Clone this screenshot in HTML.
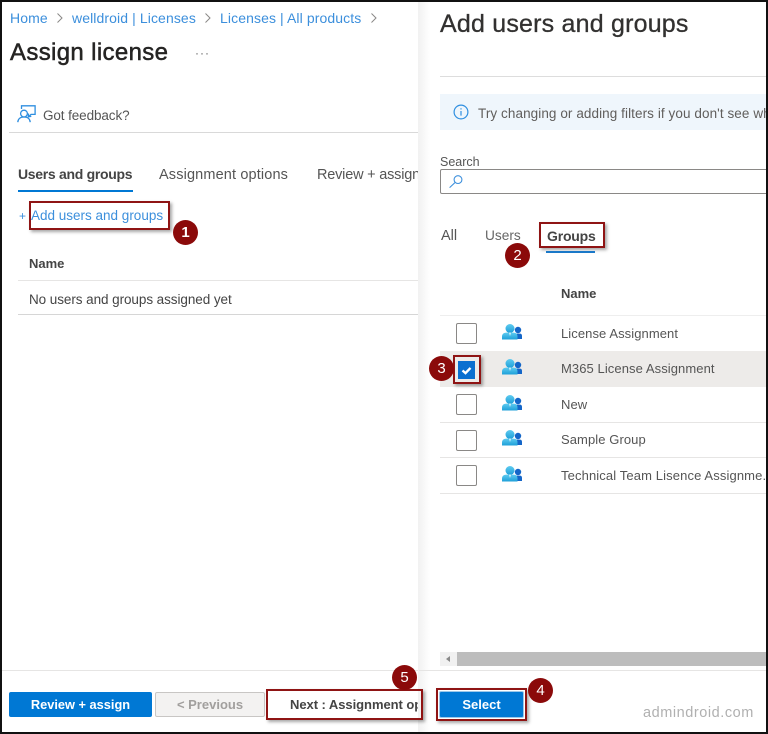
<!DOCTYPE html>
<html lang="en"><head><meta charset="utf-8"><title>Assign license</title>
<style>
html,body{margin:0;padding:0;background:#fff}
#p{position:relative;width:768px;height:734px;overflow:hidden;background:#fff;font-family:"Liberation Sans",sans-serif;color:#323130;filter:blur(.35px)}
.t{position:absolute;white-space:nowrap;line-height:20px;height:20px;font-size:14px}
.b{position:absolute}
.link{color:#3c8fdc}
.red{position:absolute;border:2px solid #8f1414;box-shadow:2px 2px 3px rgba(0,0,0,.35);box-sizing:border-box}
.c{position:absolute;width:25px;height:25px;border-radius:50%;background:#8b0a0a;color:#fff;text-align:center;line-height:25px;font-size:15px}
.cb{position:absolute;left:456px;width:21px;height:21px;box-sizing:border-box;border:1.5px solid #8a8886;border-radius:2px;background:#fff}
.l{position:absolute;height:1px;background:#e6e5e4}
svg{position:absolute;overflow:visible}
</style></head><body><div id="p">

<span class="t link" style="left:10px;top:8px;letter-spacing:.1px">Home</span>
<svg style="left:57px;top:13px" width="6" height="10" fill="none" stroke="#8a8886" stroke-width="1"><path d="M.5 .5L5 5 .5 9.5"/></svg>
<span class="t link" style="left:72px;top:8px;letter-spacing:.1px">welldroid | Licenses</span>
<svg style="left:205px;top:13px" width="6" height="10" fill="none" stroke="#8a8886" stroke-width="1"><path d="M.5 .5L5 5 .5 9.5"/></svg>
<span class="t link" style="left:220px;top:8px;letter-spacing:.1px">Licenses | All products</span>
<svg style="left:371px;top:13px" width="6" height="10" fill="none" stroke="#8a8886" stroke-width="1"><path d="M.5 .5L5 5 .5 9.5"/></svg>
<span class="t" style="left:10px;top:43px;font-size:24px;line-height:20px;color:#252423;letter-spacing:.35px;-webkit-text-stroke:.5px #252423">Assign license</span>
<span class="t" style="left:195px;top:43px;font-size:12px;color:#666;letter-spacing:1px">···</span>

<svg style="left:17px;top:105px" width="19" height="18" viewBox="0 0 19 18" fill="none" stroke="#2f8fe0" stroke-width="1.3"><path d="M4.500 4V.8h13.600v8.600H14l-2.600 2.400"/><path d="M11.500 8.500l-.2 3.200 3-.4"/><circle cx="7" cy="8.600" r="3.400"/><path d="M.8 17.200c.2-3.500 2.800-5.200 6.200-5.200s6 1.700 6.200 5.200"/></svg>
<span class="t" style="left:43px;top:106px;font-size:13.5px;color:#555;letter-spacing:-.1px">Got feedback?</span>
<div class="l" style="left:9px;top:132px;width:409px;background:#d9d9d9"></div>

<span class="t" style="left:18px;top:164px;font-size:14px;font-weight:bold;color:#444;letter-spacing:-.3px">Users and groups</span>
<div class="b" style="left:18px;top:190px;width:115px;height:2px;background:#0078d4"></div>
<span class="t" style="left:159px;top:165px;font-size:14.5px;color:#555;letter-spacing:.14px">Assignment options</span>
<span class="t" style="left:317px;top:165px;width:101px;overflow:hidden;font-size:14.5px;color:#555;letter-spacing:-.2px">Review + assign</span>

<span class="t link" style="left:19px;top:206px;font-size:12px">+</span>
<span class="t link" style="left:31px;top:206px;font-size:13.5px;letter-spacing:0">Add users and groups</span>
<div class="red" style="left:29px;top:201px;width:141px;height:29px"></div>
<div class="c" style="left:173px;top:220px;font-weight:bold">1</div>

<span class="t" style="left:29px;top:254px;font-size:13px;font-weight:bold;color:#444">Name</span>
<div class="l" style="left:18px;top:280px;width:400px"></div>
<span class="t" style="left:29px;top:290px;font-size:13.5px;color:#444;letter-spacing:-.07px">No users and groups assigned yet</span>
<div class="l" style="left:18px;top:314px;width:400px;background:#d6d6d6"></div>

<div class="l" style="left:2px;top:670px;width:416px"></div>
<div class="b" style="left:9px;top:692px;width:143px;height:25px;background:#0078d4;border-radius:2px;color:#fff;text-align:center;line-height:25px;font-size:12.8px;font-weight:bold">Review + assign</div>
<div class="b" style="left:155px;top:692px;width:110px;height:25px;box-sizing:border-box;background:#f3f2f1;border:1px solid #c8c6c4;border-radius:2px;color:#a19f9d;text-align:center;line-height:23px;font-size:13px;font-weight:bold">&lt; Previous</div>
<span class="t" style="left:290px;top:695px;width:128px;overflow:hidden;font-size:13px;font-weight:bold;color:#444;letter-spacing:-.05px">Next : Assignment options</span>

<!-- panel shadow -->
<div class="b" style="left:418px;top:2px;width:12px;height:730px;background:linear-gradient(90deg,#f1f1f1,#fff)"></div>
<div class="red" style="left:266px;top:689px;width:157px;height:31px"></div>
<div class="c" style="left:392px;top:665px;">5</div>

<span class="t" style="left:440px;top:14px;font-size:25px;line-height:20px;color:#323130;letter-spacing:.2px;-webkit-text-stroke:.3px #323130">Add users and groups</span>
<div class="l" style="left:440px;top:76px;width:326px;background:#ddd"></div>
<div class="b" style="left:440px;top:94px;width:326px;height:36px;background:#eff6fc"></div>
<svg style="left:453px;top:104px" width="16" height="16" viewBox="0 0 16 16" fill="none" stroke="#2f8fe0" stroke-width="1.2"><circle cx="8" cy="8" r="6.900"/><path d="M8 7v4.600M8 4.200v1.300"/></svg>
<span class="t" style="left:478px;top:104px;width:288px;overflow:hidden;font-size:13.5px;color:#605e5c;letter-spacing:.08px">Try changing or adding filters if you don't see what you're looking for</span>

<span class="t" style="left:440px;top:152px;font-size:12.5px;color:#555">Search</span>
<div class="b" style="left:440px;top:169px;width:330px;height:25px;box-sizing:border-box;border:1px solid #8a8886;border-radius:2px"></div>
<svg style="left:449px;top:175px" width="14" height="13" viewBox="0 0 14 13" fill="none" stroke="#3c8fdc" stroke-width="1.1"><circle cx="9" cy="4.600" r="3.900"/><path d="M6.200 7.400L.6 12.600"/></svg>

<span class="t" style="left:441px;top:226px;font-size:14.5px;color:#555">All</span>
<span class="t" style="left:485px;top:226px;font-size:13.7px;color:#666">Users</span>
<span class="t" style="left:547px;top:226px;font-size:14px;font-weight:bold;color:#444;letter-spacing:-.2px">Groups</span>
<div class="red" style="left:539px;top:222px;width:66px;height:26px"></div>
<div class="b" style="left:546px;top:251px;width:49px;height:2px;background:#1a78c8"></div>
<div class="c" style="left:505px;top:243px;">2</div>

<span class="t" style="left:561px;top:284px;font-size:13px;font-weight:bold;color:#444">Name</span>
<div class="l" style="left:440px;top:315px;width:326px;background:#eee"></div>

<div class="b" style="left:440px;top:351px;width:326px;height:36px;background:#edebe9"></div>
<div class="l" style="left:440px;top:422px;width:326px"></div>
<div class="l" style="left:440px;top:457px;width:326px"></div>
<div class="l" style="left:440px;top:493px;width:326px"></div>

<div class="cb" style="top:323px"></div>
<div class="cb" style="top:394px"></div>
<div class="cb" style="top:430px"></div>
<div class="cb" style="top:465px"></div>

<div class="b" style="left:458px;top:361px;width:17px;height:18px;background:#0a6fd0"></div>
<svg style="left:458px;top:361px" width="17" height="18" viewBox="0 0 17 18" fill="none" stroke="#fff" stroke-width="2.4"><path d="M4.500 9.500l3 2.600 5-5.200"/></svg>
<div class="red" style="left:453px;top:355px;width:28px;height:29px"></div>
<div class="c" style="left:429px;top:356px;">3</div>

<svg width="0" height="0" style="position:absolute"><defs><linearGradient id="gr" x1="0" y1="0" x2="0" y2="1"><stop offset="0" stop-color="#5ecbf0"/><stop offset="1" stop-color="#1e9fd8"/></linearGradient>
<symbol id="gi" viewBox="0 0 20 16"><circle cx="16" cy="6" r="3.200" fill="#1466c8"/><path d="M12 15V11.500q0-1.800 2-1.900h4q2 .1 2 2.400V15z" fill="#1466c8"/><circle cx="8" cy="4.500" r="4.500" fill="url(#gr)"/><path d="M0 15.500v-3q0-3.600 4-3.900h8q3.500.3 3.500 3.900v3z" fill="url(#gr)"/><path d="M7 8.600l1 3.400 1-3.400z" fill="#e8f7fd"/></symbol></defs></svg>
<svg style="left:502px;top:324px" width="20" height="16"><use href="#gi" width="20" height="16"/></svg>
<svg style="left:502px;top:359px" width="20" height="16"><use href="#gi" width="20" height="16"/></svg>
<svg style="left:502px;top:395px" width="20" height="16"><use href="#gi" width="20" height="16"/></svg>
<svg style="left:502px;top:430px" width="20" height="16"><use href="#gi" width="20" height="16"/></svg>
<svg style="left:502px;top:466px" width="20" height="16"><use href="#gi" width="20" height="16"/></svg>

<span class="t" style="left:561px;top:324px;font-size:13px;color:#555;letter-spacing:.08px">License Assignment</span>
<span class="t" style="left:561px;top:359px;font-size:13px;color:#555;letter-spacing:.08px">M365 License Assignment</span>
<span class="t" style="left:561px;top:395px;font-size:13px;color:#555;letter-spacing:.08px">New</span>
<span class="t" style="left:561px;top:430px;font-size:13px;color:#555;letter-spacing:.08px">Sample Group</span>
<span class="t" style="left:561px;top:466px;width:205px;overflow:hidden;font-size:13px;color:#555;letter-spacing:.12px">Technical Team Lisence Assignme...</span>

<div class="b" style="left:440px;top:652px;width:326px;height:14px;background:#f1f1f1"></div>
<div class="b" style="left:457px;top:652px;width:309px;height:14px;background:#bdbdbd"></div>
<div class="b" style="left:446px;top:656px;width:0;height:0;border:3.5px solid transparent;border-right:4px solid #8a8a8a;border-left:0"></div>

<div class="l" style="left:419px;top:670px;width:347px"></div>
<div class="b" style="left:439px;top:691px;width:85px;height:27px;box-sizing:border-box;background:#0078d4;border:1px solid #9cc8ea;border-radius:2px;color:#fff;text-align:center;line-height:25px;font-size:13px;font-weight:bold">Select</div>
<div class="red" style="left:436px;top:688px;width:91px;height:33px"></div>
<div class="c" style="left:528px;top:678px;">4</div>
<span class="t" style="left:643px;top:703px;font-size:14.5px;color:#b0b0b0;letter-spacing:.55px">admindroid.com</span>

<!-- frame -->
<div class="b" style="left:0;top:0;width:768px;height:2px;background:#111"></div>
<div class="b" style="left:0;top:0;width:2px;height:734px;background:#111"></div>
<div class="b" style="left:0;top:732px;width:768px;height:2px;background:#111"></div>
<div class="b" style="left:766px;top:0;width:2px;height:734px;background:#111"></div>
</div></body></html>
